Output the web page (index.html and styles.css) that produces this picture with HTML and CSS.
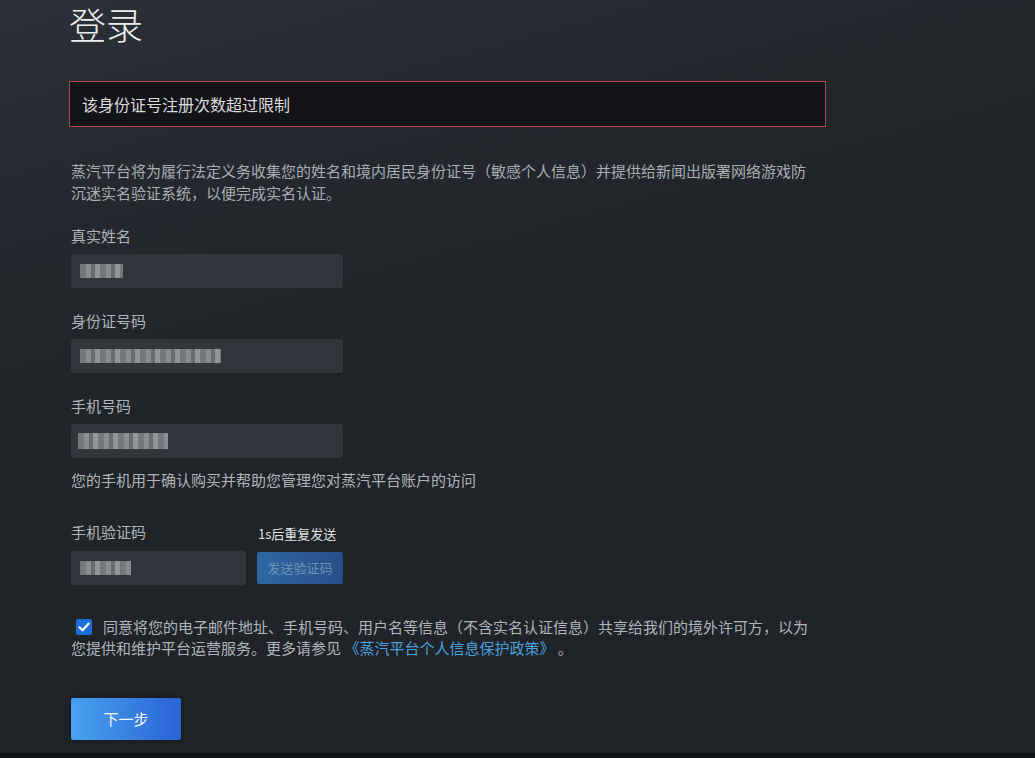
FILE: index.html
```html
<!DOCTYPE html>
<html lang="zh-CN">
<head>
<meta charset="utf-8">
<title>登录</title>
<link rel="stylesheet" href="styles.css">
</head>
<body>
<div class="page">
  <main class="content">
    <h1 class="title">登录</h1>
    <div class="error">该身份证号注册次数超过限制</div>
    <p class="desc">蒸汽平台将为履行法定义务收集您的姓名和境内居民身份证号（敏感个人信息）并提供给新闻出版署网络游戏防沉迷实名验证系统，以便完成实名认证。</p>

    <div class="field">
      <div class="label">真实姓名</div>
      <div class="input"><span class="mask mask-name"></span></div>
    </div>
    <div class="field">
      <div class="label">身份证号码</div>
      <div class="input"><span class="mask mask-id"></span></div>
    </div>
    <div class="field">
      <div class="label">手机号码</div>
      <div class="input"><span class="mask mask-phone"></span></div>
    </div>
    <div class="help">您的手机用于确认购买并帮助您管理您对蒸汽平台账户的访问</div>

    <div class="code-row">
      <div class="code-field">
        <div class="label">手机验证码</div>
        <div class="input input-short"><span class="mask mask-code"></span></div>
      </div>
      <div class="send">
        <div class="resend">1s后重复发送</div>
        <div class="send-btn">发送验证码</div>
      </div>
    </div>

    <div class="agree"><span class="checkbox"><svg viewBox="0 0 16 16" width="16" height="16"><path d="M3.5 8.3 L6.6 11.3 L12.6 4.6" fill="none" stroke="#fff" stroke-width="2.2" stroke-linecap="round" stroke-linejoin="round"/></svg></span>同意将您的电子邮件地址、手机号码、用户名等信息（不含实名认证信息）共享给我们的境外许可方，以为您提供和维护平台运营服务。更多请参见 <a class="link" href="#">《蒸汽平台个人信息保护政策》</a> 。</div>

    <div class="next-btn">下一步</div>
  </main>
  <div class="strip"></div>
</div>
</body>
</html>
```

FILE: styles.css
```css
html, body {
  margin: 0;
  padding: 0;
}
body {
  background: #202328;
  font-family: "Noto Sans CJK SC", "Noto Sans", sans-serif;
  color: #b0b5ba;
  overflow: hidden;
}
.page {
  width: 1035px;
  height: 758px;
  display: flex;
  flex-direction: column;
  background: linear-gradient(165deg, #2d3037 0%, #24272d 25%, #202328 45%, #202328 100%);
}
.content {
  padding-left: 71px;
  width: 755px;
  flex: 1;
}
.title {
  margin: 0 0 0 -2px;
  font-size: 37px;
  line-height: 48px;
  font-weight: 300;
  color: #eeeeee;
}
.error {
  margin: 33px 0 0 -2px;
  border: 1px solid #b04648;
  background: #131418;
  padding: 11px 12px;
  font-size: 16px;
  line-height: 22px;
  color: #dcdcdc;
}
.desc {
  margin: 33px 0 0;
  width: 745px;
  font-size: 15px;
  line-height: 22px;
  color: #a9aeb3;
}
.field {
  margin-top: 21px;
  display: flex;
  flex-direction: column;
  gap: 7px;
}
.field + .field {
  margin-top: 22px;
}
.label {
  font-size: 15px;
  line-height: 22px;
  color: #b0b5ba;
}
.input {
  width: 272px;
  height: 34px;
  background: #32353c;
  border-radius: 3px;
  display: flex;
  align-items: center;
  padding-left: 9px;
  box-sizing: border-box;
}
.input-short {
  width: 175px;
}
.mask {
  display: block;
  height: 14px;
  background: repeating-linear-gradient(90deg, #8a8d92 0 6px, #a6a8ac 6px 11px, #7a7d82 11px 15px, #b4b6b9 15px 20px);
  opacity: 0.75;
  filter: blur(0.6px);
}
.mask-name { width: 43px; }
.mask-id { width: 141px; }
.mask-phone { width: 90px; height: 16px; margin-left: -2px; }
.mask-code { width: 51px; }
.help {
  margin-top: 11px;
  font-size: 15px;
  line-height: 22px;
  color: #b0b5ba;
}
.code-row {
  margin-top: 30px;
  display: flex;
  gap: 11px;
}
.code-field {
  display: flex;
  flex-direction: column;
  gap: 8px;
}
.send {
  display: flex;
  flex-direction: column;
  padding-top: 3px;
}
.resend {
  font-size: 13px;
  line-height: 20px;
  color: #e2e2e2;
  margin-left: 1px;
}
.send-btn {
  margin-top: 8px;
  width: 86px;
  height: 32px;
  border-radius: 2px;
  background: linear-gradient(90deg, #2e66a3 0%, #2a4e88 100%);
  color: #6f92b9;
  font-size: 13px;
  line-height: 32px;
  text-align: center;
}
.agree {
  margin-top: 31px;
  width: 745px;
  font-size: 15px;
  line-height: 21px;
  color: #b0b5ba;
}
.checkbox {
  display: inline-block;
  width: 16px;
  height: 16px;
  margin: 0 11px 0 5px;
  border-radius: 2px;
  background: #1c6fd8;
  vertical-align: -2px;
}
.checkbox svg {
  display: block;
}
.link {
  color: #4aa2dc;
  text-decoration: none;
}
.next-btn {
  margin-top: 40px;
  width: 110px;
  height: 42px;
  border-radius: 2px;
  background: linear-gradient(90deg, #48a3f0 0%, #2a62d5 100%);
  box-shadow: 0 0 5px rgba(0, 0, 0, 0.45);
  color: #f4f8ff;
  font-size: 15px;
  line-height: 42px;
  text-align: center;
}
.strip {
  height: 5px;
  background: #101318;
}
```
